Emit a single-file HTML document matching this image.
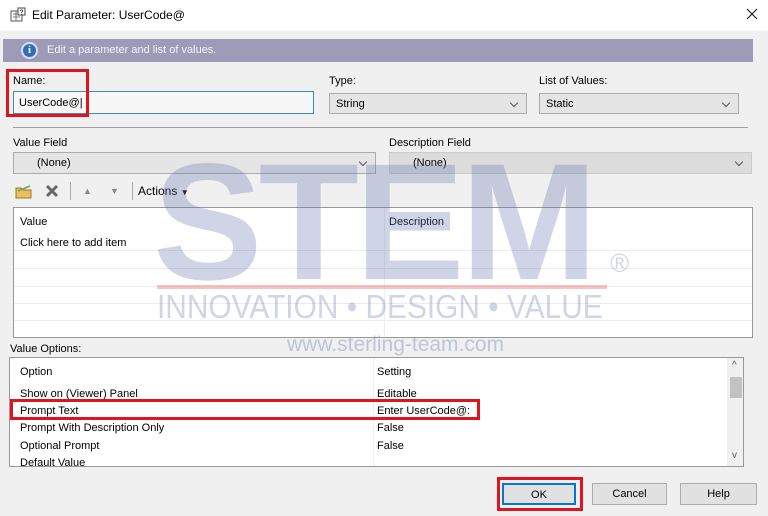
<!DOCTYPE html>
<html><head><style>
*{box-sizing:border-box;margin:0;padding:0}
body{width:768px;height:516px;overflow:hidden;background:#f0f0f0;font-family:"Liberation Sans",sans-serif;font-size:11px;color:#000;position:relative}
.a{position:absolute;white-space:nowrap}
.sel{position:absolute;background:#e5e5e5;border:1px solid #adadad;padding:4px 6px;font-size:11px}
.sel::after{content:"";position:absolute;right:9px;top:6px;width:5px;height:5px;border-right:1px solid #555;border-bottom:1px solid #555;transform:rotate(45deg)}
.btn{position:absolute;background:#e1e1e1;border:1px solid #adadad;text-align:center;line-height:20px;font-size:11px}
.hl{position:absolute;height:1px;background:#ececec}
.red{position:absolute;border:3px solid #e0141e}
</style></head><body>
<div class="a" style="left:0;top:0;width:768px;height:31px;background:#fff"></div>
<svg class="a" style="left:10px;top:7px" width="16" height="16"><rect x="1" y="4" width="11" height="10" fill="none" stroke="#555"/><path d="M3 7h7M3 10h7M6 4v10" stroke="#777"/><rect x="8" y="1" width="7" height="7" fill="#fff" stroke="#444"/><text x="9.5" y="7.5" font-size="7" font-family="Liberation Sans">?</text></svg>
<div class="a" style="left:32px;top:8px;font-size:12px">Edit Parameter: UserCode@</div>
<svg class="a" style="left:746px;top:8px" width="12" height="12"><path d="M1 1L11 11M11 1L1 11" stroke="#222" stroke-width="1.2"/></svg>
<div class="a" style="left:3px;top:39px;width:750px;height:23px;background:#9e9bb8"></div>
<div class="a" style="left:21px;top:42px;width:17px;height:17px;border-radius:50%;background:#2f6fb5;border:2px solid #dde;color:#fff;font-size:11px;font-weight:bold;text-align:center;line-height:13px;font-family:'Liberation Serif',serif">i</div>
<div class="a" style="left:47px;top:44px;color:#f2f2f8">Edit a parameter and list of values.</div>
<div class="a" style="left:13px;top:75px">Name:</div>
<div class="a" style="left:13px;top:91px;width:301px;height:23px;border:1px solid #3c8cbf;background:#f7f7f7;padding:5px 5px">UserCode@|</div>
<div class="a" style="left:329px;top:75px">Type:</div>
<div class="sel" style="left:329px;top:93px;width:198px;height:21px">String</div>
<div class="a" style="left:539px;top:75px">List of Values:</div>
<div class="sel" style="left:539px;top:93px;width:200px;height:21px">Static</div>
<div class="red" style="left:6px;top:69px;width:83px;height:48px"></div>
<div class="a" style="left:13px;top:127px;width:735px;height:1px;background:#a0a0a0"></div>
<div class="a" style="left:13px;top:137px">Value Field</div>
<div class="sel" style="left:13px;top:152px;width:363px;height:22px;padding-left:23px">(None)</div>
<div class="a" style="left:389px;top:137px">Description Field</div>
<div class="sel" style="left:389px;top:152px;width:363px;height:22px;padding-left:23px;background:#dcdcdc;border-color:#ccc">(None)</div>
<svg class="a" style="left:15px;top:183px" width="18" height="16"><path d="M1 5h5l2 2h8v8H1z" fill="#e8c060" stroke="#a07820"/><path d="M3 8l12-5" stroke="#8a6" stroke-width="2"/></svg>
<svg class="a" style="left:45px;top:184px" width="14" height="14"><path d="M2 2L12 12M12 2L2 12" stroke="#666" stroke-width="3"/></svg>
<div class="a" style="left:70px;top:182px;width:1px;height:18px;background:#aaa"></div>
<div class="a" style="left:83px;top:186px;font-size:9px;color:#888">▲</div>
<div class="a" style="left:110px;top:186px;font-size:9px;color:#888">▼</div>
<div class="a" style="left:132px;top:182px;width:1px;height:18px;background:#aaa"></div>
<div class="a" style="left:138px;top:184px;font-size:12px">Actions <span style="font-size:8px">▼</span></div>
<div class="a" style="left:13px;top:207px;width:740px;height:131px;background:#fff;border:1px solid #999"></div>
<div class="a" style="left:384px;top:208px;width:1px;height:129px;background:#eee"></div>
<div class="a" style="left:20px;top:216px">Value</div>
<div class="a" style="left:389px;top:216px">Description</div>
<div class="a" style="left:20px;top:237px">Click here to add item</div>
<div class="hl" style="left:14px;top:250px;width:738px"></div>
<div class="hl" style="left:14px;top:268px;width:738px"></div>
<div class="hl" style="left:14px;top:286px;width:738px"></div>
<div class="hl" style="left:14px;top:303px;width:738px"></div>
<div class="hl" style="left:14px;top:320px;width:738px"></div>
<div class="a" style="left:10px;top:343px">Value Options:</div>
<div class="a" style="left:9px;top:357px;width:735px;height:110px;background:#fff;border:1px solid #999;overflow:hidden">
<div class="a" style="left:363px;top:0;width:1px;height:110px;background:#eee"></div>
<div class="a" style="left:10px;top:8px">Option</div><div class="a" style="left:367px;top:8px">Setting</div>
<div class="a" style="left:10px;top:30px">Show on (Viewer) Panel</div><div class="a" style="left:367px;top:30px">Editable</div>
<div class="a" style="left:10px;top:47px">Prompt Text</div><div class="a" style="left:367px;top:47px">Enter UserCode@:</div>
<div class="a" style="left:10px;top:64px">Prompt With Description Only</div><div class="a" style="left:367px;top:64px">False</div>
<div class="a" style="left:10px;top:82px">Optional Prompt</div><div class="a" style="left:367px;top:82px">False</div>
<div class="a" style="left:10px;top:99px">Default Value</div>
<div class="a" style="left:717px;top:0;width:17px;height:110px;background:#f0f0f0"></div>
<div class="a" style="left:720px;top:19px;width:12px;height:21px;background:#c2c2c2"></div>
<div class="a" style="left:722px;top:2px;font-size:10px;color:#555">^</div>
<div class="a" style="left:722px;top:92px;font-size:10px;color:#555">v</div>
</div>
<div class="red" style="left:10px;top:399px;width:470px;height:21px"></div>
<div class="btn" style="left:502px;top:483px;width:74px;height:22px;border:2px solid #0078d7">OK</div>
<div class="red" style="left:497px;top:477px;width:86px;height:34px"></div>
<div class="btn" style="left:592px;top:483px;width:75px;height:22px">Cancel</div>
<div class="btn" style="left:680px;top:483px;width:77px;height:22px">Help</div>
<div class="a" style="left:153px;top:140px;font-size:166px;font-weight:bold;color:rgba(95,115,175,0.3);line-height:1;transform:scaleX(0.99);transform-origin:left;letter-spacing:-4px">STEM</div>
<div class="a" style="left:610px;top:248px;font-size:26px;color:rgba(95,115,175,0.3)">®</div>
<div class="a" style="left:157px;top:285px;width:450px;height:4px;background:rgba(240,120,120,0.45)"></div>
<div class="a" style="left:157px;top:288px;font-size:33px;color:rgba(95,115,175,0.3);transform:scaleX(0.905);transform-origin:left">INNOVATION • DESIGN • VALUE</div>
<div class="a" style="left:287px;top:333px;font-size:21px;color:rgba(95,115,175,0.35)">www.sterling-team.com</div>
</body></html>
